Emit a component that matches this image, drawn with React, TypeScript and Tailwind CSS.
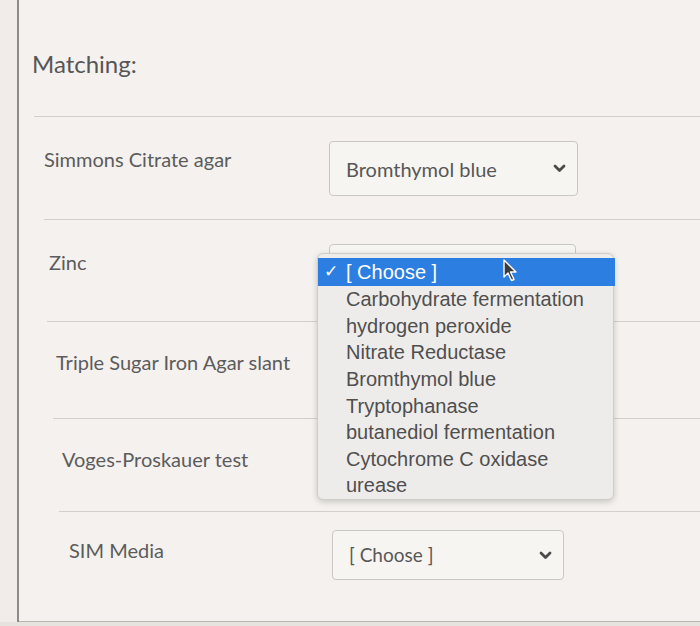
import React from 'react';

const rows = [
  { label: 'Simmons Citrate agar', value: 'Bromthymol blue', row: 'ml-[15px] h-[103px]', col: 'w-[295px] pl-[10px] pt-[27px]', sel: 'mt-[24px] w-[249px] h-[55px]' },
  { label: 'Zinc', value: '', row: 'ml-[25px] h-[102px]', col: 'w-[285px] pl-[5px] pt-[27px]', sel: 'mt-[24px] w-[247px] h-[55px]' },
  { label: 'Triple Sugar Iron Agar slant', value: '', row: 'ml-[28px] h-[97px]', col: 'w-[282px] pl-[9px] pt-[25px]', sel: 'mt-[24px] w-[247px] h-[55px]' },
  { label: 'Voges-Proskauer test', value: '', row: 'ml-[34px] h-[93px]', col: 'w-[276px] pl-[9px] pt-[25px]', sel: 'mt-[22px] w-[247px] h-[55px]' },
  { label: 'SIM Media', value: '[ Choose ]', row: 'ml-[40px] flex-1', col: 'w-[273px] pl-[10px] pt-[23px]', sel: 'mt-[18px] w-[232px] h-[50px]' },
];

const options = [
  'Carbohydrate fermentation',
  'hydrogen peroxide',
  'Nitrate Reductase',
  'Bromthymol blue',
  'Tryptophanase',
  'butanediol fermentation',
  'Cytochrome C oxidase',
  'urease',
];

const Chevron = () => (
  <svg width="13" height="9" viewBox="0 0 13 9" className="text-[#4a4a4a]">
    <polyline points="2,2 6.5,6.5 11,2" fill="none" stroke="currentColor" strokeWidth="2.8" strokeLinecap="round" strokeLinejoin="round" />
  </svg>
);

export default function App() {
  return (
    <div className="relative w-[700px] h-[626px] overflow-hidden bg-[#e6e3de] flex" style={{ fontFamily: 'Lato, "Open Sans", sans-serif' }}>
      <div className="w-[19px] h-[622px] bg-[#f1ecea] border-r-[2px] border-[#8d8b88] shrink-0" />
      <div className="flex-1 h-[622px] flex flex-col bg-[#f4f1ee] border-b border-[#b9b6b2]">
        <div className="h-[116px] pl-[13px] pt-[46px] text-[24px] text-[#565656]">Matching:</div>
        {rows.map((r) => (
          <div key={r.label} className={`${r.row} flex border-t border-[#d3d0cc]`}>
            <div className={`${r.col} text-[20px] text-[#5c5c5c]`}>{r.label}</div>
            <div className={`${r.sel} flex items-center justify-between pl-[16px] pr-[11px] border border-[#c9c7c4] rounded-[4px] bg-[#f7f5f2] text-[#575757] ${r.value === '[ Choose ]' ? 'text-[19px]' : 'text-[20px]'}`}>
              <span>{r.value}</span>
              <Chevron />
            </div>
          </div>
        ))}
      </div>

      {/* open select menu */}
      <div className="absolute left-[317px] top-[253px] w-[297px] h-[247px] pt-[4px] rounded-[6px] border border-[#cfccc9] bg-[#eeecea] shadow-[0_2px_6px_rgba(0,0,0,0.18)]" style={{ fontFamily: '"Liberation Sans", Arial, sans-serif' }}>
        <div className="h-[28px] flex items-center bg-[#2c7ee0] text-white text-[20px] -mr-[2px]">
          <span className="w-[28px] pl-[6px] text-[17px]">✓</span>
          <span>[ Choose ]</span>
        </div>
        {options.map((o) => (
          <div key={o} className="h-[26.6px] flex items-center pl-[28px] text-[20px] text-[#4f4f4f]">
            {o}
          </div>
        ))}
      </div>

      {/* mouse cursor */}
      <svg className="absolute left-[503px] top-[259px]" width="16" height="24" viewBox="0 0 16 24">
        <path d="M1 1 L1 18 L5 14 L8.5 21.5 L11 20.5 L7.5 13 L13 13 Z" fill="#3a3a3a" stroke="#ffffff" strokeWidth="1.4" strokeLinejoin="round" />
      </svg>
    </div>
  );
}
